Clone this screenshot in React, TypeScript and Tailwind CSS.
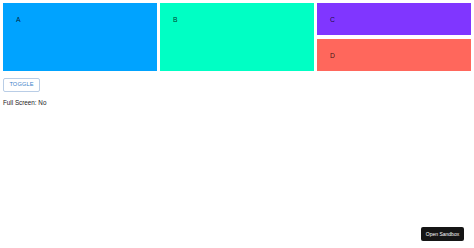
import React, { useState } from "react";

export default function App() {
  const [full, setFull] = useState(false);
  const font = { fontFamily: '"Liberation Sans", Arial, sans-serif' };
  return (
    <div className="relative w-[474px] h-[248px] bg-white overflow-hidden" style={font}>
      <div className="p-[3px]">
        <div className="grid grid-cols-3 gap-[3px] h-[68px]">
          <div className="bg-[#00a3ff] pl-[13px] pt-[13px] text-[6.8px] leading-[7px] text-black/80">A</div>
          <div className="bg-[#00ffc4] pl-[13px] pt-[13px] text-[6.8px] leading-[7px] text-black/80">B</div>
          <div className="grid grid-rows-2 gap-[4px]">
            <div className="bg-[#8036ff] pl-[13px] pt-[13px] text-[6.8px] leading-[7px] text-black/80">C</div>
            <div className="bg-[#ff675c] pl-[13px] pt-[13px] text-[6.8px] leading-[7px] text-black/80">D</div>
          </div>
        </div>
        <button
          onClick={() => setFull(!full)}
          className="mt-[7px] w-[37px] h-[14px] flex items-center justify-center rounded-[2px] border border-[#b9cde6] text-[#3b82c9] text-[5.7px] leading-none tracking-[0.1px]"
        >
          TOGGLE
        </button>
        <div className="mt-[7px] text-[6.3px] leading-[7px] text-[#222]">Full Screen: {full ? "Yes" : "No"}</div>
      </div>
      <div className="absolute left-[421px] top-[227px] w-[43px] h-[14px] rounded-[2px] bg-[#151515] text-white text-[5px] flex items-center justify-center leading-none">
        Open Sandbox
      </div>
    </div>
  );
}
